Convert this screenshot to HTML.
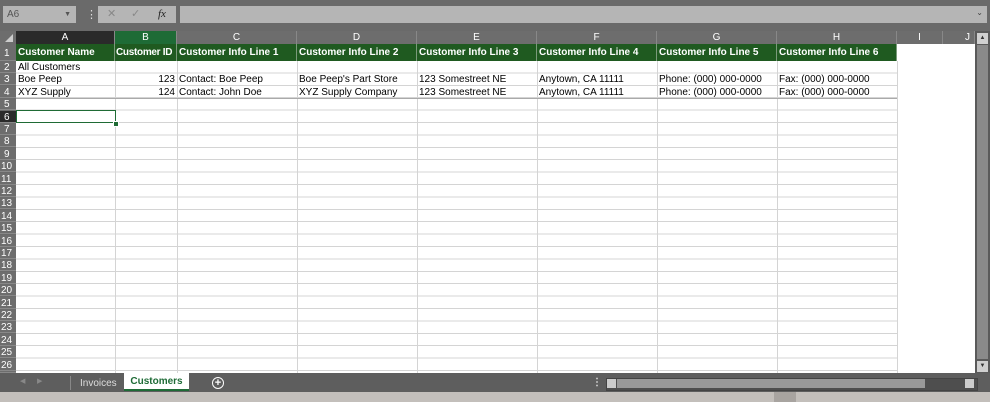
<!DOCTYPE html>
<html><head><style>
body{margin:0;width:990px;height:402px;overflow:hidden;background:#6a6a6a;font-family:"Liberation Sans",Arial,sans-serif;position:relative}
.a{position:absolute}
.hdr{position:absolute;top:31px;height:13px;background:#6d6d6d;color:#fff;font-size:10px;text-align:center;line-height:14px;border-right:1px solid #888;box-sizing:border-box}
.gh{position:absolute;top:44px;height:17px;background:#1f5a20;color:#fff;font-size:10px;font-weight:bold;line-height:18px;padding-left:2px;box-sizing:border-box;border-right:1px solid #7a9a7a;white-space:nowrap;overflow:hidden}
.rn{position:absolute;left:0;width:16px;height:12px;background:#6d6d6d;color:#fff;font-size:10px;line-height:14px;padding-left:4px;box-sizing:border-box;border-bottom:1px solid #888}
.c{position:absolute;font-size:10px;color:#000;line-height:14px;white-space:nowrap}
.v{position:absolute;top:61px;width:1px;height:312px;background:#d4d4d4}
</style></head><body>
<div class="a" style="left:3px;top:6px;width:73px;height:17px;background:#b5b5b5;font-size:10px;color:#555;line-height:17px;padding-left:4px;box-sizing:border-box">A6<span style="position:absolute;right:5px;font-size:7px">▼</span></div>
<div class="a" style="left:86px;top:8px;color:#ddd;font-size:11px">⋮</div>
<div class="a" style="left:98px;top:6px;width:78px;height:17px;background:#b5b5b5;font-size:11px;color:#888;line-height:17px"><span style="position:absolute;left:9px">✕</span><span style="position:absolute;left:33px">✓</span><span style="position:absolute;left:60px;color:#222;font-style:italic;font-family:'Liberation Serif',serif">fx</span></div>
<div class="a" style="left:180px;top:6px;width:807px;height:17px;background:#b5b5b5"><span style="position:absolute;right:4px;top:2px;font-size:8px;color:#444">⌄</span></div>
<div class="a" style="left:0;top:31px;width:16px;height:13px;background:#6d6d6d"></div>
<div class="a" style="left:5px;top:34px;width:0;height:0;border-left:8px solid transparent;border-bottom:8px solid #ccc"></div>
<div class="hdr" style="left:16px;width:99px;background:#2a2a2a">A</div>
<div class="hdr" style="left:115px;width:62px;background:#1e6b36">B</div>
<div class="hdr" style="left:177px;width:120px">C</div>
<div class="hdr" style="left:297px;width:120px">D</div>
<div class="hdr" style="left:417px;width:120px">E</div>
<div class="hdr" style="left:537px;width:120px">F</div>
<div class="hdr" style="left:657px;width:120px">G</div>
<div class="hdr" style="left:777px;width:120px">H</div>
<div class="hdr" style="left:897px;width:46px">I</div>
<div class="hdr" style="left:943px;width:32px;text-align:right;padding-right:4px">J</div>
<div class="a" style="left:16px;top:44px;width:959px;height:329px;background:#fff"></div>
<div class="a" style="left:16px;top:61px;width:881px;height:312px;background:repeating-linear-gradient(to bottom,transparent 0,transparent 11.4px,#d4d4d4 11.4px,#d4d4d4 12.4px)"></div>
<div class="v" style="left:115px"></div><div class="v" style="left:177px"></div><div class="v" style="left:297px"></div><div class="v" style="left:417px"></div><div class="v" style="left:537px"></div><div class="v" style="left:657px"></div><div class="v" style="left:777px"></div><div class="v" style="left:897px"></div>
<div class="a" style="left:16px;top:97.6px;width:881px;height:1px;background:#aaa"></div>
<div class="rn" style="top:44px;height:17px;line-height:20px">1</div>
<div class="gh" style="left:16px;width:99px">Customer Name</div>
<div class="gh" style="left:115px;width:62px;padding-left:1px;letter-spacing:-0.3px">Customer ID</div>
<div class="gh" style="left:177px;width:120px">Customer Info Line 1</div>
<div class="gh" style="left:297px;width:120px">Customer Info Line 2</div>
<div class="gh" style="left:417px;width:120px">Customer Info Line 3</div>
<div class="gh" style="left:537px;width:120px">Customer Info Line 4</div>
<div class="gh" style="left:657px;width:120px">Customer Info Line 5</div>
<div class="gh" style="left:777px;width:120px">Customer Info Line 6</div>
<div class="rn" style="top:61px">2</div><div class="rn" style="top:73.4px">3</div><div class="rn" style="top:85.8px">4</div><div class="rn" style="top:98.2px">5</div><div class="rn" style="top:110.6px;background:#2a2a2a">6</div><div class="rn" style="top:123px">7</div><div class="rn" style="top:135.4px">8</div><div class="rn" style="top:147.8px">9</div><div class="rn" style="top:160.2px;padding-left:1px">10</div><div class="rn" style="top:172.6px;padding-left:1px">11</div><div class="rn" style="top:185px;padding-left:1px">12</div><div class="rn" style="top:197.4px;padding-left:1px">13</div><div class="rn" style="top:209.8px;padding-left:1px">14</div><div class="rn" style="top:222.2px;padding-left:1px">15</div><div class="rn" style="top:234.6px;padding-left:1px">16</div><div class="rn" style="top:247px;padding-left:1px">17</div><div class="rn" style="top:259.4px;padding-left:1px">18</div><div class="rn" style="top:271.8px;padding-left:1px">19</div><div class="rn" style="top:284.2px;padding-left:1px">20</div><div class="rn" style="top:296.6px;padding-left:1px">21</div><div class="rn" style="top:309px;padding-left:1px">22</div><div class="rn" style="top:321.4px;padding-left:1px">23</div><div class="rn" style="top:333.8px;padding-left:1px">24</div><div class="rn" style="top:346.2px;padding-left:1px">25</div><div class="rn" style="top:358.6px;padding-left:1px">26</div><div class="rn" style="top:371px;height:2px"></div>
<div class="c" style="left:18px;top:61px">All Customers</div>
<div class="c" style="left:18px;top:73.4px">Boe Peep</div>
<div class="c" style="left:18px;top:85.8px">XYZ Supply</div>
<div class="c" style="left:115px;width:60px;text-align:right;top:73.4px">123</div>
<div class="c" style="left:115px;width:60px;text-align:right;top:85.8px">124</div>
<div class="c" style="left:179px;top:73.4px">Contact: Boe Peep</div>
<div class="c" style="left:179px;top:85.8px">Contact: John Doe</div>
<div class="c" style="left:299px;top:73.4px">Boe Peep's Part Store</div>
<div class="c" style="left:299px;top:85.8px">XYZ Supply Company</div>
<div class="c" style="left:419px;top:73.4px">123 Somestreet NE</div>
<div class="c" style="left:419px;top:85.8px">123 Somestreet NE</div>
<div class="c" style="left:539px;top:73.4px">Anytown, CA 11111</div>
<div class="c" style="left:539px;top:85.8px">Anytown, CA 11111</div>
<div class="c" style="left:659px;top:73.4px">Phone: (000) 000-0000</div>
<div class="c" style="left:659px;top:85.8px">Phone: (000) 000-0000</div>
<div class="c" style="left:779px;top:73.4px">Fax: (000) 000-0000</div>
<div class="c" style="left:779px;top:85.8px">Fax: (000) 000-0000</div>
<div class="a" style="left:16px;top:110px;width:100px;height:13px;border:1px solid #1f6b35;box-sizing:border-box"></div>
<div class="a" style="left:113px;top:121px;width:4px;height:4px;background:#1f6b35;border:1px solid #fff"></div>
<div class="a" style="left:975px;top:31px;width:15px;height:342px;background:#5a5a5a"></div>
<div class="a" style="left:977px;top:33px;width:11px;height:11px;background:#d0d0d0;font-size:6px;text-align:center;line-height:11px;color:#333">▲</div>
<div class="a" style="left:977px;top:45px;width:11px;height:314px;background:#8a8a8a"></div>
<div class="a" style="left:977px;top:361px;width:11px;height:11px;background:#d0d0d0;font-size:6px;text-align:center;line-height:11px;color:#333">▼</div>
<div class="a" style="left:0;top:373px;width:990px;height:19px;background:#5e5e5e"></div>
<div class="a" style="left:20px;top:377px;color:#888;font-size:7px">◀&nbsp;&nbsp;&nbsp;&nbsp;&nbsp;&nbsp;▶</div>
<div class="a" style="left:70px;top:376px;width:1px;height:14px;background:#888"></div>
<div class="a" style="left:80px;top:378px;color:#ddd;font-size:10px">Invoices</div>
<div class="a" style="left:124px;top:373px;width:65px;height:18px;background:#fff;border-bottom:2px solid #1e6b36;box-sizing:border-box;color:#1e6b36;font-weight:bold;font-size:10px;text-align:center;line-height:18px">Customers</div>
<div class="a" style="left:212px;top:377px;width:10px;height:10px;border:1px solid #fff;border-radius:50%;color:#fff;font-size:11px;line-height:10px;text-align:center;font-weight:bold">+</div>
<div class="a" style="left:592px;top:377px;color:#ddd;font-size:10px;font-weight:bold">⋮</div>
<div class="a" style="left:606px;top:378px;width:370px;height:11px;background:#4e4e4e;border:1px solid #444"></div>
<div class="a" style="left:607px;top:379px;width:9px;height:9px;background:#ccc"></div>
<div class="a" style="left:617px;top:379px;width:308px;height:9px;background:#999"></div>
<div class="a" style="left:965px;top:379px;width:9px;height:9px;background:#ccc"></div>
<div class="a" style="left:0;top:392px;width:990px;height:10px;background:#c3bfbb"></div>
<div class="a" style="left:774px;top:392px;width:22px;height:10px;background:#a8a4a0"></div>
</body></html>
